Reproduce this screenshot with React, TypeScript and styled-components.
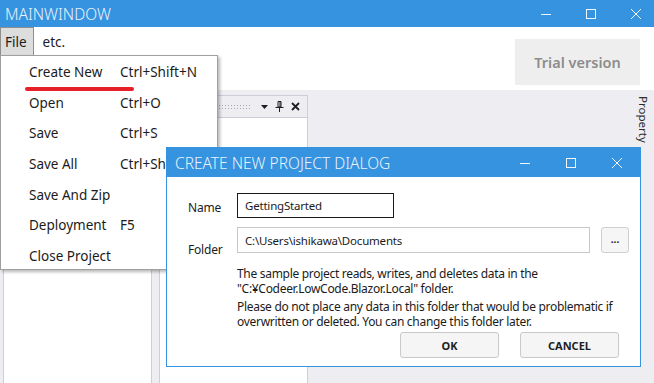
import React from 'react'
import styled, { createGlobalStyle } from 'styled-components'

const BLUE = '#3593df'
const DOCK = '#eeeef2'

const GlobalStyle = createGlobalStyle`
  html, body {
    margin: 0;
    padding: 0;
    background: #fff;
  }
  body {
    font-family: "Noto Sans", "Open Sans", sans-serif;
    color: #1b1b1b;
  }
`

const fileItems = [
    { label: 'Create New', shortcut: 'Ctrl+Shift+N', marked: true },
    { label: 'Open', shortcut: 'Ctrl+O' },
    { label: 'Save', shortcut: 'Ctrl+S' },
    { label: 'Save All', shortcut: 'Ctrl+Shift+S' },
    { label: 'Save And Zip', shortcut: '' },
    { label: 'Deployment', shortcut: 'F5' },
    { label: 'Close Project', shortcut: '' },
]

const MinimizeIcon = () => (
    <svg width="10" height="10" viewBox="0 0 10 10">
        <path d="M0 5.5h10" stroke="currentColor" strokeWidth="1" />
    </svg>
)

const MaximizeIcon = () => (
    <svg width="10" height="10" viewBox="0 0 10 10">
        <rect x="0.5" y="0.5" width="9" height="9" fill="none" stroke="currentColor" strokeWidth="1" />
    </svg>
)

const CloseIcon = () => (
    <svg width="10" height="10" viewBox="0 0 10 10">
        <path d="M0 0L10 10M10 0L0 10" stroke="currentColor" strokeWidth="1" />
    </svg>
)

const WindowControls: React.FC<{ gap: number, right: number }> = ({ gap, right }) => (
    <StyledControls $gap={gap} $right={right}>
        <MinimizeIcon />
        <MaximizeIcon />
        <CloseIcon />
    </StyledControls>
)

const PanelHeaderBar = () => (
    <StyledPanelHeader>
        <StyledGrip />
        <svg width="7" height="4" viewBox="0 0 7 4">
            <path d="M0 0h7L3.5 4z" fill="#1e1e1e" />
        </svg>
        <svg width="9" height="11" viewBox="0 0 9 11">
            <path d="M3 0.5h3v5.5h-3z" fill="none" stroke="#1e1e1e" strokeWidth="1" />
            <path d="M5 1v5" stroke="#1e1e1e" strokeWidth="1" />
            <path d="M0.5 6.5h8" stroke="#1e1e1e" strokeWidth="1" />
            <path d="M4.5 6.5v4.5" stroke="#1e1e1e" strokeWidth="1" />
        </svg>
        <svg width="9" height="9" viewBox="0 0 9 9">
            <path d="M1 1L8 8M8 1L1 8" stroke="#1e1e1e" strokeWidth="1.8" />
        </svg>
    </StyledPanelHeader>
)

const App: React.FC = () => {
    return (
        <StyledScreen>
            <GlobalStyle />
            <StyledTitleBar>
                <StyledTitle>MAINWINDOW</StyledTitle>
                <WindowControls gap={35} right={13} />
            </StyledTitleBar>

            <StyledHeader>
                <StyledMenuBar>
                    <StyledMenuHeader $open>File</StyledMenuHeader>
                    <StyledMenuHeader>etc.</StyledMenuHeader>
                </StyledMenuBar>
                <StyledTrialButton>Trial version</StyledTrialButton>
            </StyledHeader>

            <StyledDock>
                <StyledToolPanel>
                    <PanelHeaderBar />
                    <StyledPanelBody />
                </StyledToolPanel>
                <StyledToolPanel $offset={7}>
                    <PanelHeaderBar />
                    <StyledPanelBody />
                </StyledToolPanel>
                <StyledDocArea />
                <StyledSideTabs>
                    <StyledSideTab>Property</StyledSideTab>
                </StyledSideTabs>
            </StyledDock>

            <StyledDropdown>
                {fileItems.map((item) => (
                    <StyledMenuItem key={item.label}>
                        <StyledItemLabel>{item.label}</StyledItemLabel>
                        <span>{item.shortcut}</span>
                        {item.marked && <StyledMark />}
                    </StyledMenuItem>
                ))}
            </StyledDropdown>

            <StyledDialog>
                <StyledDialogTitle>
                    <StyledDialogCaption>CREATE NEW PROJECT DIALOG</StyledDialogCaption>
                    <WindowControls gap={36} right={18} />
                </StyledDialogTitle>
                <StyledDialogBody>
                    <StyledFieldRow>
                        <StyledFieldLabel $drop={3}>Name</StyledFieldLabel>
                        <StyledInput $focused $width={157} $height={25}>GettingStarted</StyledInput>
                    </StyledFieldRow>
                    <StyledFieldRow $gap={9}>
                        <StyledFieldLabel $drop={14}>Folder</StyledFieldLabel>
                        <StyledInput $width={353} $height={26}>C:\Users\ishikawa\Documents</StyledInput>
                        <StyledBrowseButton>...</StyledBrowseButton>
                    </StyledFieldRow>
                    <StyledNote>
                        <p>
                            The sample project reads, writes, and deletes data in the<br />
                            "C:¥Codeer.LowCode.Blazor.Local" folder.
                        </p>
                        <p>
                            Please do not place any data in this folder that would be problematic if<br />
                            overwritten or deleted. You can change this folder later.
                        </p>
                    </StyledNote>
                    <StyledButtonRow>
                        <StyledDialogButton>OK</StyledDialogButton>
                        <StyledDialogButton>CANCEL</StyledDialogButton>
                    </StyledButtonRow>
                </StyledDialogBody>
            </StyledDialog>
        </StyledScreen>
    )
}

const StyledScreen = styled.div`
    position: relative;
    width: 654px;
    height: 383px;
    overflow: hidden;
    display: flex;
    flex-direction: column;
`

const StyledTitleBar = styled.div`
    height: 27px;
    flex-shrink: 0;
    display: flex;
    align-items: center;
    background: ${BLUE};
    color: #eaf2fc;
`

const StyledTitle = styled.div`
    padding-left: 5px;
    font-size: 15.5px;
    font-weight: 300;
`

const StyledControls = styled.div<{ $gap: number, $right: number }>`
    margin-left: auto;
    display: flex;
    align-items: center;
    gap: ${(p) => p.$gap}px;
    padding-right: ${(p) => p.$right}px;
    color: #f2f7fd;

    svg {
        display: block;
    }
`

const StyledHeader = styled.div`
    height: 63px;
    flex-shrink: 0;
    display: flex;
    justify-content: space-between;
    align-items: flex-start;
    background: #fff;
`

const StyledMenuBar = styled.div`
    display: flex;
    height: 28px;
    font-size: 13.5px;
`

const StyledMenuHeader = styled.div<{ $open?: boolean }>`
    box-sizing: border-box;
    height: 28px;
    display: flex;
    align-items: center;
    padding: 0 6px 0 ${(p) => (p.$open ? 4 : 8)}px;
    background: ${(p) => (p.$open ? '#dddddd' : 'transparent')};
    border: 1px solid ${(p) => (p.$open ? '#8e8e8e' : 'transparent')};
    border-bottom: none;
`

const StyledTrialButton = styled.div`
    margin: 12px 14px 0 0;
    width: 125px;
    height: 46px;
    display: flex;
    align-items: center;
    justify-content: center;
    background: #eeeeee;
    color: #8c8c8c;
    font-size: 14.5px;
    font-weight: 600;
`

const StyledDock = styled.div`
    flex: 1;
    display: flex;
    padding: 5px 0 0 3px;
    background: ${DOCK};
`

const StyledToolPanel = styled.div<{ $offset?: number }>`
    box-sizing: border-box;
    width: 149px;
    margin-left: ${(p) => p.$offset || 0}px;
    display: flex;
    flex-direction: column;
    border: 1px solid #cccedb;
    border-bottom: none;
`

const StyledPanelHeader = styled.div`
    height: 21px;
    display: flex;
    align-items: center;
    gap: 7px;
    padding: 0 7px 0 4px;

    svg {
        display: block;
        flex-shrink: 0;
    }
`

const StyledGrip = styled.div`
    flex: 1;
    height: 5px;
    margin-right: 3px;
    background-image: radial-gradient(circle, #a9a9b0 0.7px, transparent 0.9px);
    background-size: 3px 3px;
`

const StyledPanelBody = styled.div`
    flex: 1;
    background: #fff;
    border-top: 1px solid #cccedb;
`

const StyledDocArea = styled.div`
    flex: 1;
`

const StyledSideTabs = styled.div`
    width: 22px;
    display: flex;
    justify-content: center;
`

const StyledSideTab = styled.div`
    writing-mode: vertical-rl;
    font-size: 11.5px;
    color: #2d2d2d;
    padding-top: 1px;
    height: fit-content;
`

const StyledDropdown = styled.div`
    position: absolute;
    left: 0;
    top: 55px;
    box-sizing: border-box;
    width: 218px;
    height: 215px;
    padding-top: 1px;
    background: #fff;
    border: 1px solid #a0a0a0;
    box-shadow: 2px 2px 3px rgba(0, 0, 0, 0.28);
    font-size: 13.5px;
`

const StyledMenuItem = styled.div`
    position: relative;
    height: 30.6px;
    display: flex;
    align-items: center;
    padding-left: 28px;
    white-space: nowrap;
`

const StyledItemLabel = styled.span`
    width: 91px;
    flex-shrink: 0;
`

const StyledMark = styled.div`
    position: absolute;
    left: 24px;
    top: 30px;
    width: 109px;
    height: 4px;
    border-radius: 2px;
    background: #e61f28;
`

const StyledDialog = styled.div`
    position: absolute;
    left: 166px;
    top: 147px;
    box-sizing: border-box;
    width: 475px;
    height: 220px;
    display: flex;
    flex-direction: column;
    background: #fff;
    border: 1px solid ${BLUE};
`

const StyledDialogTitle = styled.div`
    height: 29px;
    flex-shrink: 0;
    display: flex;
    align-items: center;
    background: ${BLUE};
    color: #eaf2fc;
`

const StyledDialogCaption = styled.div`
    padding-left: 8px;
    font-size: 15.5px;
    font-weight: 300;
`

const StyledDialogBody = styled.div`
    flex: 1;
    display: flex;
    flex-direction: column;
    padding: 16px 11px 8px 21px;
`

const StyledFieldRow = styled.div<{ $gap?: number }>`
    display: flex;
    margin-top: ${(p) => p.$gap || 0}px;
`

const StyledFieldLabel = styled.div<{ $drop: number }>`
    width: 49px;
    display: flex;
    align-items: center;
    padding-top: ${(p) => p.$drop}px;
    font-size: 12px;
    letter-spacing: -0.2px;
`

const StyledInput = styled.div<{ $focused?: boolean, $width: number, $height: number }>`
    box-sizing: border-box;
    width: ${(p) => p.$width}px;
    height: ${(p) => p.$height}px;
    display: flex;
    align-items: center;
    padding-left: 7px;
    border: 1px solid ${(p) => (p.$focused ? '#1a1a1a' : '#c8c8c8')};
    font-size: 11.5px;
    letter-spacing: -0.2px;
    white-space: nowrap;
`

const StyledBrowseButton = styled.div`
    box-sizing: border-box;
    width: 28px;
    height: 26px;
    margin-left: 11px;
    display: flex;
    align-items: center;
    justify-content: center;
    border: 1px solid #cfcfcf;
    border-radius: 3px;
    background: #f6f6f6;
    font-size: 10px;
    font-weight: 700;
    padding-bottom: 3px;
`

const StyledNote = styled.div`
    margin: 8px 0 0 49px;
    font-size: 12px;
    letter-spacing: -0.3px;
    line-height: 15px;
    white-space: nowrap;

    p {
        margin: 0 0 3px;
    }
`

const StyledButtonRow = styled.div`
    margin-top: auto;
    display: flex;
    justify-content: flex-end;
    gap: 21px;
    padding-right: 10px;
`

const StyledDialogButton = styled.div`
    box-sizing: border-box;
    width: 99px;
    height: 26px;
    display: flex;
    align-items: center;
    justify-content: center;
    border: 1px solid #c9c9c9;
    border-radius: 3px;
    background: #f5f5f5;
    font-size: 11px;
    font-weight: 700;
    color: #1e1e1e;
`

export default App
